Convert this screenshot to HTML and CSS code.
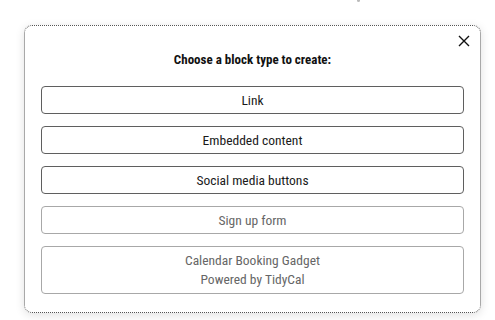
FILE: index.html
```html
<!DOCTYPE html>
<html>
<head>
<meta charset="utf-8">
<link rel="stylesheet" href="styles.css">
</head>
<body>
<div class="page">
  <span class="dot"></span>
  <div class="modal">
    <div class="close-row">
      <svg class="close" width="12" height="12" viewBox="0 0 12 12"><path d="M1 1 L11 11 M11 1 L1 11" stroke="#111" stroke-width="1.4" fill="none"/></svg>
    </div>
    <h2 class="title">Choose a block type to create:</h2>
    <div class="options">
      <button class="opt">Link</button>
      <button class="opt">Embedded content</button>
      <button class="opt">Social media buttons</button>
      <button class="opt disabled">Sign up form</button>
      <button class="opt disabled tall">Calendar Booking Gadget<br>Powered by TidyCal</button>
    </div>
  </div>
</div>
</body>
</html>
```
FILE: styles.css
```css
html, body {
  margin: 0;
  padding: 0;
  background: #fff;
}
body {
  font-family: "Roboto Condensed", "Liberation Sans Narrow", Roboto, sans-serif;
  font-stretch: condensed;
}
.page {
  position: relative;
  width: 495px;
  height: 320px;
  padding: 25px 14px 0 24px;
  box-sizing: border-box;
}
.dot {
  position: absolute;
  left: 357px;
  top: 0;
  width: 3px;
  height: 2px;
  background: #bbb;
  border-radius: 0 0 2px 2px;
}
.modal {
  width: 457px;
  height: 288px;
  box-sizing: border-box;
  border: 1px dotted #555;
  border-radius: 8px;
  box-shadow: 0 2px 10px rgba(0,0,0,0.12);
  padding: 7px 16px 0 16px;
}
.close-row {
  display: flex;
  justify-content: flex-end;
  height: 16px;
}
.close {
  margin-top: 2px;
  margin-right: -6px;
}
.title {
  margin: 3px 0 0 0;
  text-align: center;
  font-size: 13px;
  font-weight: 700;
  color: #111;
  line-height: 16px;
}
.options {
  margin-top: 18px;
  display: flex;
  flex-direction: column;
  gap: 12px;
}
.opt {
  font-family: inherit;
  font-stretch: condensed;
  height: 28px;
  border: 1px solid #5f5f5f;
  border-radius: 4px;
  background: #fff;
  color: #1a1a1a;
  font-size: 13.5px;
  line-height: 19px;
  padding: 0;
  text-align: center;
}
.opt.disabled {
  border-color: #a8a8a8;
  color: #666;
}
.opt.tall {
  height: 48px;
}
```
